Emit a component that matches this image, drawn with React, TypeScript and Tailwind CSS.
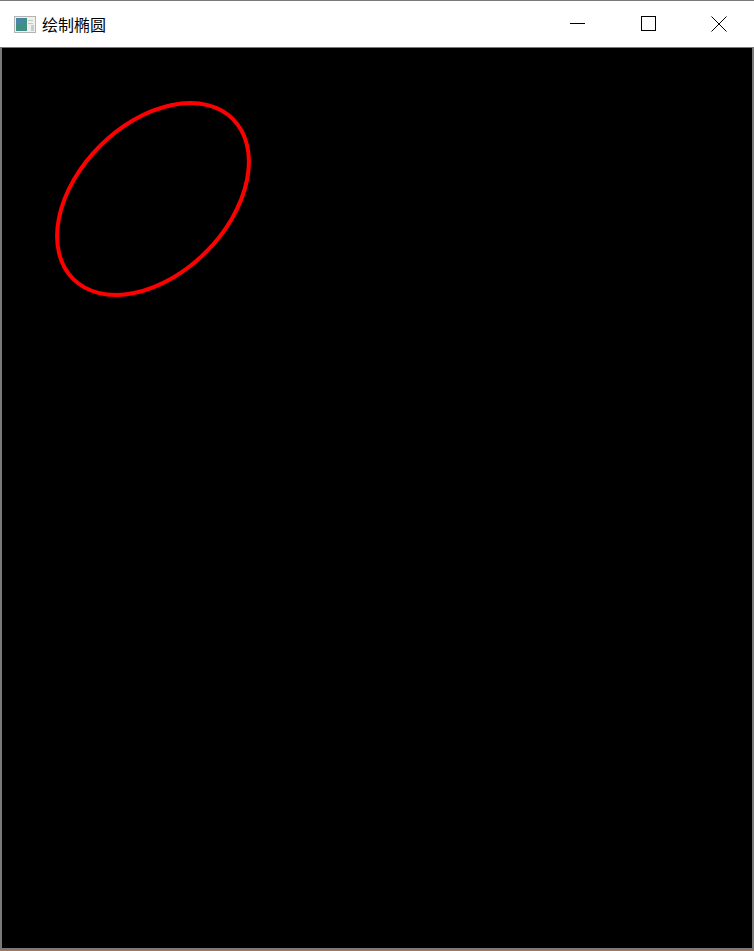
export default function App() {
  return (
    <div className="flex h-[951px] w-[754px] flex-col overflow-hidden bg-[#7a7a7a] font-['Noto_Sans_CJK_SC','Liberation_Sans',sans-serif]">
      {/* title bar */}
      <div className="mt-px flex h-[46px] items-center bg-white">
        <svg className="ml-[14px] h-[17px] w-[22px]" viewBox="0 0 22 17">
          <rect x="0" y="0" width="22" height="17" fill="#b4b4b4" />
          <rect x="1" y="1" width="20" height="15" fill="#eef0ee" />
          <rect x="2" y="2" width="11" height="13" fill="#3f8f85" />
          <rect x="2" y="2" width="7" height="6" fill="#4a86a8" />
          <rect x="14" y="4" width="5" height="1" fill="#c4c8c4" />
          <rect x="14" y="7" width="5" height="1" fill="#c4c8c4" />
          <rect x="17" y="9" width="3" height="6" fill="#c9ccc9" />
        </svg>
        <span className="ml-[6px] text-base leading-none text-black">绘制椭圆</span>
        <div className="ml-auto flex h-full">
          <button className="flex h-full w-[71px] items-center justify-center">
            <svg className="h-4 w-4" viewBox="0 0 16 16">
              <path d="M0 7.5H15" stroke="#000" strokeWidth="1" />
            </svg>
          </button>
          <button className="flex h-full w-[71px] items-center justify-center">
            <svg className="h-4 w-4" viewBox="0 0 16 16">
              <rect x="0.5" y="0.5" width="14" height="14" fill="none" stroke="#000" strokeWidth="1" />
            </svg>
          </button>
          <button className="flex h-full w-[70px] items-center justify-center">
            <svg className="h-4 w-4" viewBox="0 0 16 16">
              <path d="M0.5 0.5L15.5 15.5M15.5 0.5L0.5 15.5" stroke="#000" strokeWidth="1" />
            </svg>
          </button>
        </div>
      </div>
      {/* drawing area */}
      <div className="mx-[2px] mt-px h-[900px] bg-black">
        <svg className="block h-full w-full" viewBox="0 0 750 900">
          <ellipse
            cx="151"
            cy="151"
            rx="113"
            ry="75"
            transform="rotate(-45 151 151)"
            fill="none"
            stroke="#ff0000"
            strokeWidth="4"
          />
        </svg>
      </div>
      <div className="mt-[2px] h-px bg-[#a5765a]" />
    </div>
  );
}
